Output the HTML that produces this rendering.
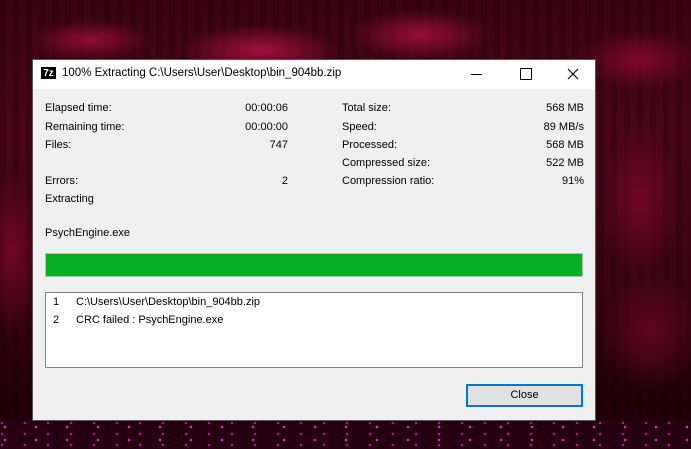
<!DOCTYPE html>
<html><head><style>
body{margin:0;width:691px;height:449px;overflow:hidden;position:relative;font-family:"Liberation Sans",sans-serif;font-size:11px;color:#000;
background:
radial-gradient(ellipse 60px 20px at 90px 40px,#900c34 0,transparent 100%),
radial-gradient(ellipse 80px 25px at 260px 50px,#a0103e 0,transparent 100%),
radial-gradient(ellipse 70px 25px at 420px 35px,#980e38 0,transparent 100%),
radial-gradient(ellipse 60px 30px at 640px 60px,#800828 0,transparent 100%),
radial-gradient(ellipse 40px 80px at 640px 200px,#700624 0,transparent 100%),
radial-gradient(ellipse 30px 80px at 12px 250px,#700624 0,transparent 100%),
radial-gradient(ellipse 50px 60px at 650px 330px,#600520 0,transparent 100%),
repeating-linear-gradient(90deg,rgba(0,0,0,.15) 0 6px,transparent 6px 13px),
linear-gradient(#3a0310,#48051a 30%,#36030e 70%,#200007 90%,#280010);}
.sp{position:absolute;left:0;right:0;top:421px;height:28px;background:
radial-gradient(circle at 2px 2px,#b01890 1px,transparent 1.5px) 0 0/23px 11px,
radial-gradient(circle at 5px 6px,#e030c0 1px,transparent 1.5px) 0 0/31px 13px,#240010;}
.dlg{position:absolute;left:32px;top:59px;width:564px;height:362px;background:#f0f0f0;border:1px solid #555;box-sizing:border-box}
.tb{position:absolute;left:0;top:0;right:0;height:29px;background:#fff}
.t{position:absolute;white-space:nowrap}
.r{text-align:right}
.bar{position:absolute;left:12px;top:193px;width:538px;height:24px;background:#06b025;border:1px solid #bcbcbc;box-sizing:border-box}
.list{position:absolute;left:12px;top:232px;width:538px;height:76px;background:#fff;border:1px solid #828282;box-sizing:border-box}
.btn{position:absolute;left:433px;top:324px;width:117px;height:23px;background:#e1e1e1;border:2px solid #0078d7;box-sizing:border-box;text-align:center;line-height:19px}
</style></head><body>
<div class="sp"></div>
<div class="dlg">
<div class="tb">
<div class="t" style="left:8px;top:7px;width:15px;height:12px;background:#000;color:#fff;font-size:10px;font-weight:bold;line-height:12px;text-align:center;border:1px solid #000;box-sizing:border-box;">7z</div>
<div class="t" style="left:29px;top:7px;font-size:11.5px">100% Extracting C:\Users\User\Desktop\bin_904bb.zip</div>
<div class="t" style="left:438px;top:14px;width:11px;height:1px;background:#000"></div>
<div class="t" style="left:487px;top:8px;width:10px;height:10px;border:1px solid #000"></div>
<svg class="t" style="left:534px;top:8px" width="12" height="12"><path d="M1 1L11 11M11 1L1 11" stroke="#000" stroke-width="1.1"/></svg>
</div>
<div class="t" style="left:12px;top:42px">Elapsed time:</div>
<div class="t" style="left:12px;top:61px">Remaining time:</div>
<div class="t" style="left:12px;top:79px">Files:</div>
<div class="t" style="left:12px;top:115px">Errors:</div>
<div class="t" style="left:12px;top:133px">Extracting</div>
<div class="t" style="left:12px;top:167px">PsychEngine.exe</div>
<div class="t r" style="left:155px;width:100px;top:42px">00:00:06</div>
<div class="t r" style="left:155px;width:100px;top:61px">00:00:00</div>
<div class="t r" style="left:155px;width:100px;top:79px">747</div>
<div class="t r" style="left:155px;width:100px;top:115px">2</div>
<div class="t" style="left:309px;top:42px">Total size:</div>
<div class="t" style="left:309px;top:61px">Speed:</div>
<div class="t" style="left:309px;top:79px">Processed:</div>
<div class="t" style="left:309px;top:97px">Compressed size:</div>
<div class="t" style="left:309px;top:115px">Compression ratio:</div>
<div class="t r" style="left:451px;width:100px;top:42px">568 MB</div>
<div class="t r" style="left:451px;width:100px;top:61px">89 MB/s</div>
<div class="t r" style="left:451px;width:100px;top:79px">568 MB</div>
<div class="t r" style="left:451px;width:100px;top:97px">522 MB</div>
<div class="t r" style="left:451px;width:100px;top:115px">91%</div>
<div class="bar"></div>
<div class="list">
<div class="t" style="left:7px;top:3px">1</div>
<div class="t" style="left:30px;top:3px">C:\Users\User\Desktop\bin_904bb.zip</div>
<div class="t" style="left:7px;top:21px">2</div>
<div class="t" style="left:30px;top:21px">CRC failed : PsychEngine.exe</div>
</div>
<div class="btn">Close</div>
</div>
</body></html>
